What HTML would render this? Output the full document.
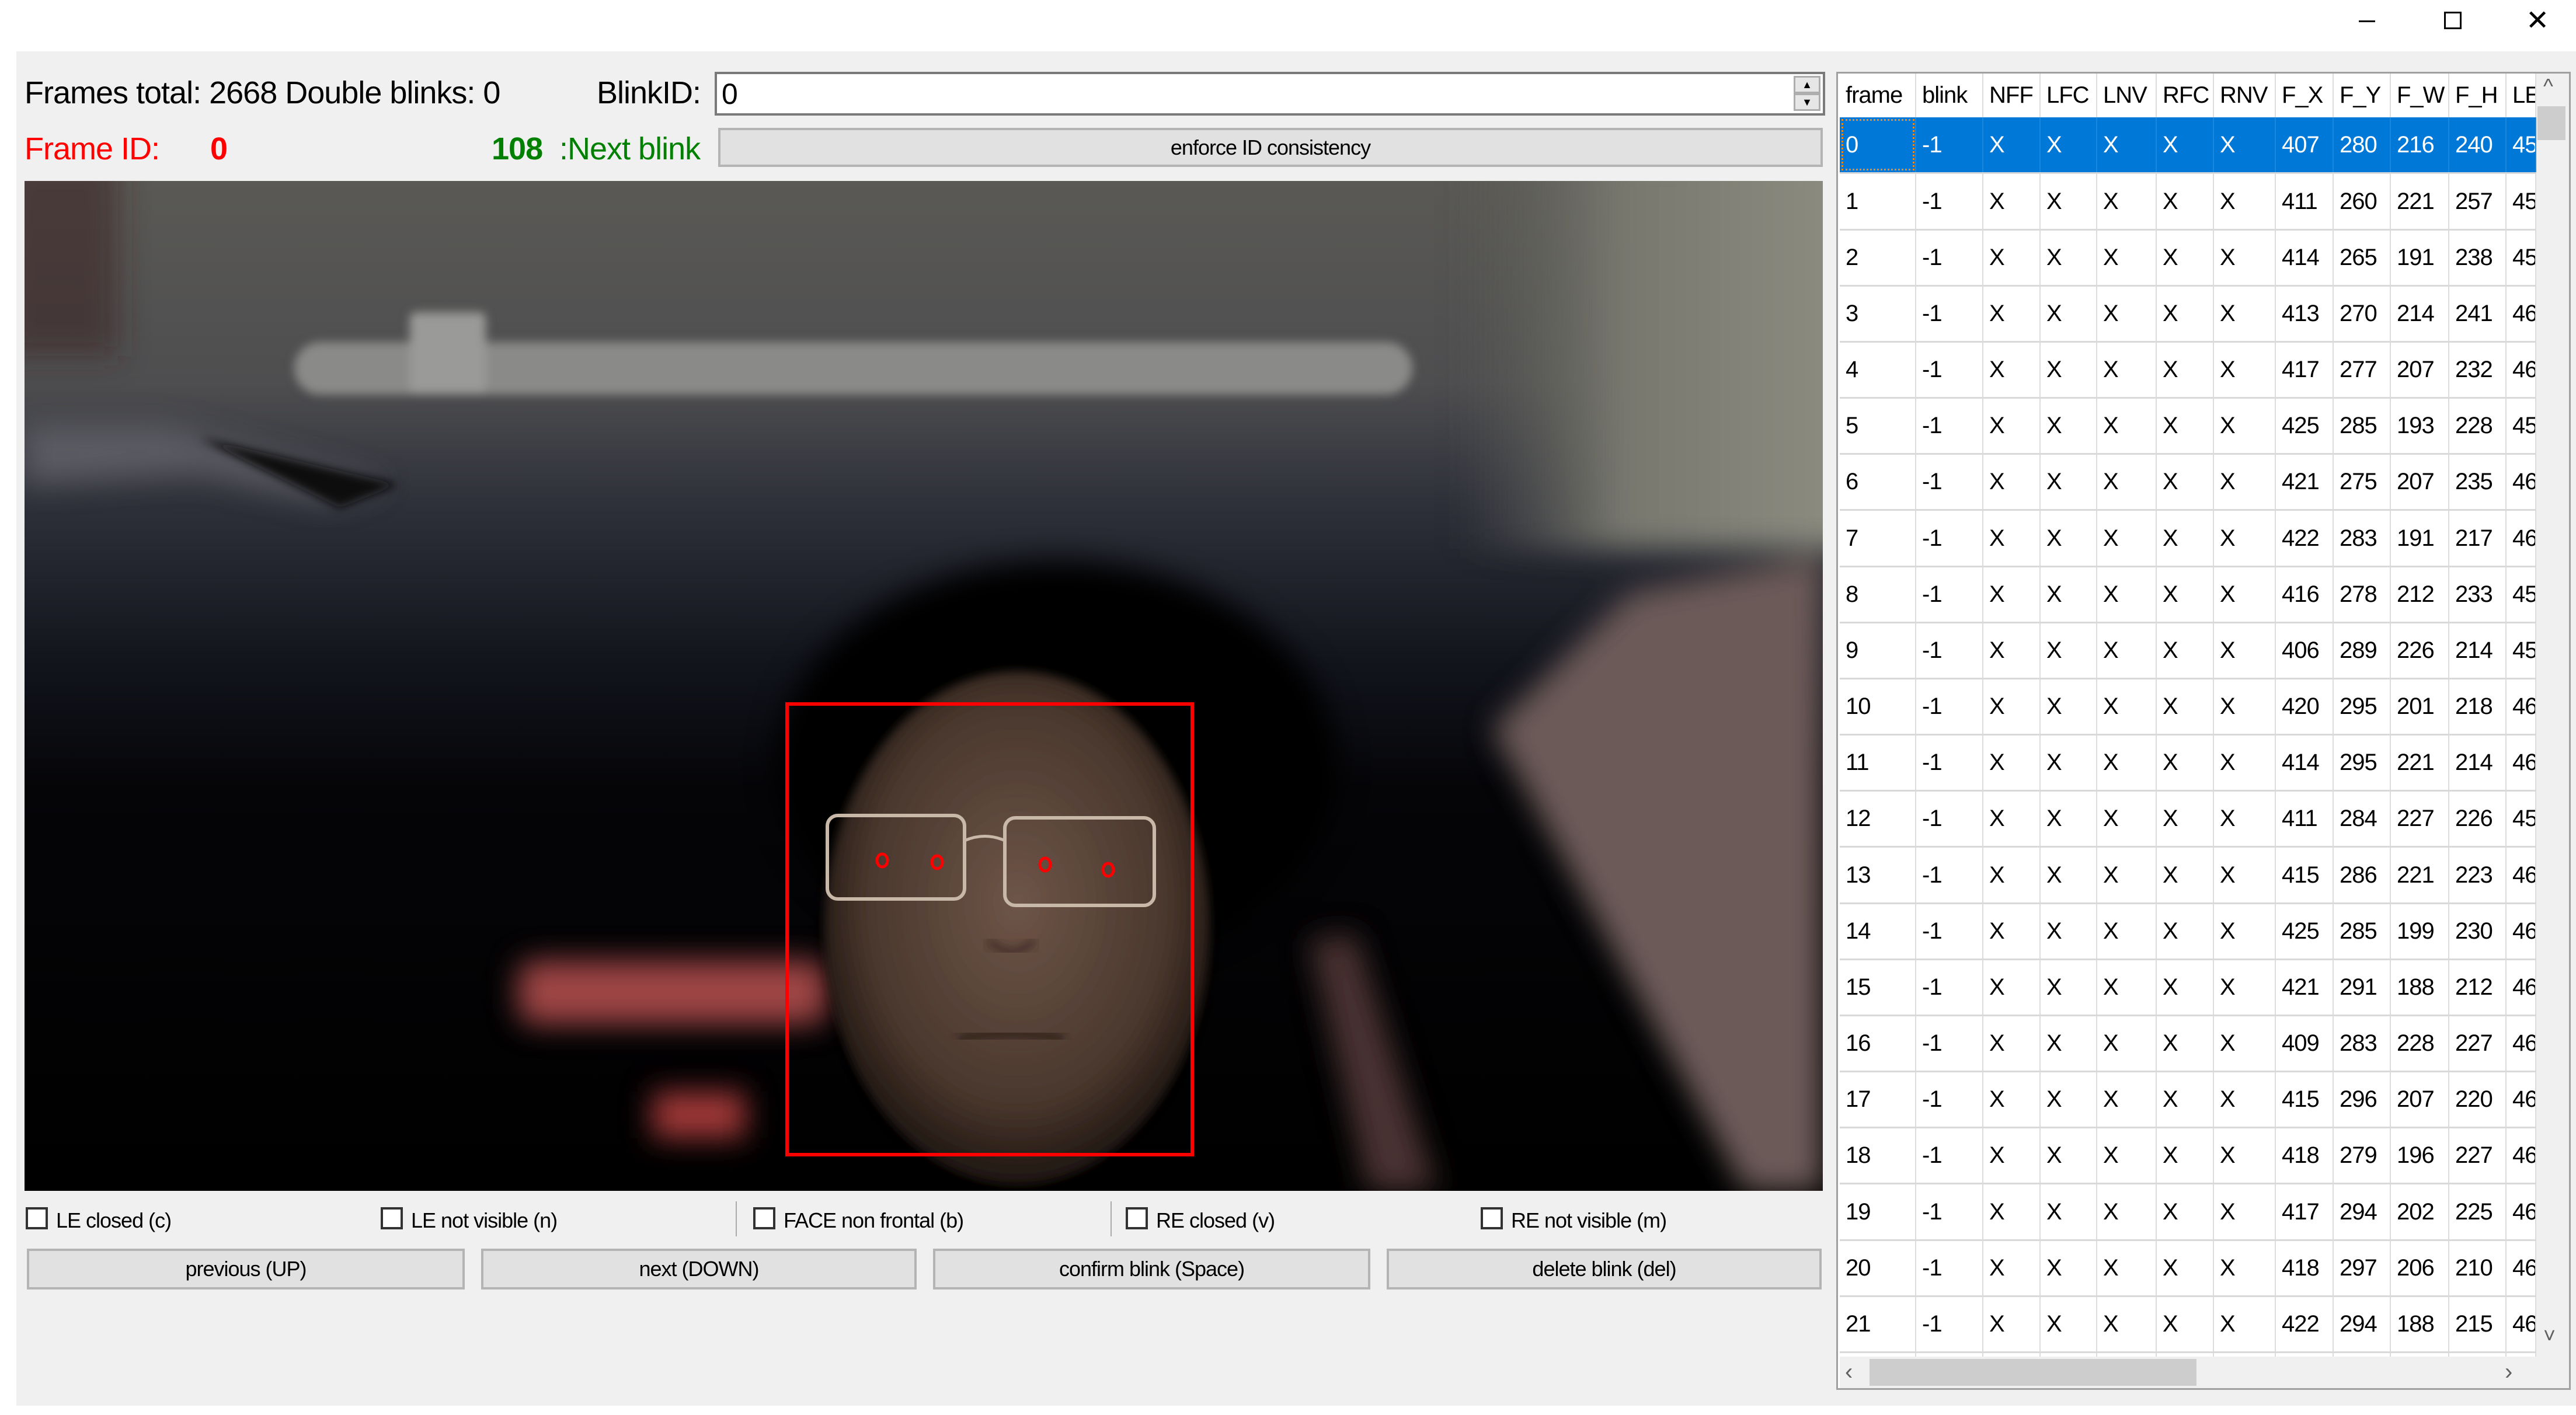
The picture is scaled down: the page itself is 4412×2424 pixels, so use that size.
<!DOCTYPE html>
<html><head><meta charset="utf-8"><style>
*{margin:0;padding:0;box-sizing:border-box}
body{width:4412px;height:2424px;background:#fff;position:relative;overflow:hidden;font-family:"Liberation Sans",sans-serif}
.a{position:absolute}
.panel{left:28px;top:88px;width:4384px;height:2320px;background:#f0f0f0}
.t{position:absolute;font-size:54px;white-space:nowrap;line-height:1;letter-spacing:-1px}
.btn{position:absolute;background:#e1e1e1;border:4px solid #b4b4b4;font-size:36px;display:flex;align-items:center;justify-content:center;color:#000;letter-spacing:-1px}
.cb{position:absolute;width:38px;height:38px;background:#fff;border:4px solid #333}
.cl{position:absolute;font-size:36px;letter-spacing:-1px}
.row{position:absolute;left:0;width:1193px;height:97px;display:grid;grid-template-columns:131px 115px 98px 97px 102px 98px 106px 99px 98px 100px 98px 51px;border-bottom:3px solid #d9d9d9;font-size:40px;letter-spacing:-1px}
.row div{border-right:2px solid #dcdcdc;padding-left:10px;display:flex;align-items:center;overflow:hidden;white-space:nowrap}
.hd{height:75px;border-bottom:none}
.sel{background:#0078d7;color:#fff}
.sel div{border-right:2px solid #1a86dc}
</style></head><body>
<div class="a" style="left:4040px;top:35px;width:28px;height:3px;background:#000"></div>
<div class="a" style="left:4186px;top:20px;width:30px;height:30px;border:3px solid #000"></div>
<div class="t" style="left:4326px;top:12px;font-size:48px">✕</div>

<div class="a panel"></div>
<div class="t" style="left:42px;top:132px">Frames total: 2668 Double blinks: 0</div>
<div class="t" style="left:1022px;top:132px">BlinkID:</div>
<div class="a" style="left:1224px;top:123px;width:1902px;height:75px;background:#fff;border:4px solid #7a7a7a"></div>
<div class="t" style="left:1236px;top:136px;font-size:50px">0</div>
<div class="a" style="left:3072px;top:130px;width:46px;height:30px;background:#e6e6e6;border:3px solid #adadad;font-size:18px;text-align:center;line-height:24px">▲</div>
<div class="a" style="left:3072px;top:160px;width:46px;height:30px;background:#e6e6e6;border:3px solid #adadad;font-size:18px;text-align:center;line-height:24px">▼</div>

<div class="t" style="left:42px;top:228px;color:#f00">Frame ID:</div>
<div class="t" style="left:360px;top:228px;color:#f00;font-weight:bold">0</div>
<div class="t" style="left:842px;top:228px;color:#008000;font-weight:bold">108</div>
<div class="t" style="left:958px;top:228px;color:#008000">:Next blink</div>
<div class="btn" style="left:1230px;top:219px;width:1892px;height:67px">enforce ID consistency</div>

<svg class="a" style="left:42px;top:310px" width="3080" height="1730" viewBox="0 0 3080 1730">
<defs>
<linearGradient id="bg" x1="0" y1="0" x2="0" y2="1">
<stop offset="0" stop-color="#5a5955"/><stop offset="0.2" stop-color="#4e4e50"/><stop offset="0.33" stop-color="#2c2e38"/><stop offset="0.48" stop-color="#12141c"/><stop offset="0.6" stop-color="#050508"/><stop offset="1" stop-color="#000"/>
</linearGradient>
<radialGradient id="face" cx="0.5" cy="0.45" r="0.55"><stop offset="0" stop-color="#6e5548"/><stop offset="0.7" stop-color="#4a382e"/><stop offset="1" stop-color="#1e1510"/></radialGradient>
<linearGradient id="rt" x1="0" y1="0" x2="1" y2="0"><stop offset="0" stop-color="#5a5a55" stop-opacity="0"/><stop offset="0.4" stop-color="#77776e"/><stop offset="1" stop-color="#8e8e82"/></linearGradient>
<filter id="bl"><feGaussianBlur stdDeviation="25"/></filter>
<filter id="bl2"><feGaussianBlur stdDeviation="8"/></filter>
</defs>
<rect width="3080" height="1730" fill="url(#bg)"/>
<g filter="url(#bl)">
<rect x="2450" y="-50" width="700" height="680" fill="url(#rt)"/>
<rect x="-40" y="-40" width="200" height="340" fill="#3a2a28" opacity="0.6"/>
<path d="M0 420 L240 420 L620 520 L520 550 L300 500 L0 520Z" fill="#6a6a70" opacity="0.7"/>
<path d="M2514 938 L2750 706 L3080 640 L3080 1730 L2946 1730 Z" fill="#6c5a58"/>
<ellipse cx="1768" cy="1000" rx="480" ry="350" fill="#030303"/>
<rect x="845" y="1335" width="530" height="110" rx="30" fill="#9e4444"/>
<rect x="1075" y="1560" width="160" height="80" fill="#a03838"/>
<path d="M2200 1300 L2300 1730 L2420 1730 L2280 1290Z" fill="#4a3030"/>
</g>
<g filter="url(#bl2)">
<rect x="462" y="276" width="1915" height="90" rx="45" fill="#8a8a88"/>
<rect x="660" y="225" width="130" height="140" rx="10" fill="#9a9a98"/>
<path d="M300 440 L640 520 L540 560 Z" fill="#111"/>
<ellipse cx="1700" cy="1280" rx="330" ry="440" fill="url(#face)"/>
</g>
<rect x="1375" y="1087" width="235" height="143" rx="18" fill="none" stroke="#c8b8a8" stroke-width="6"/>
<rect x="1679" y="1091" width="256" height="150" rx="18" fill="none" stroke="#c8b8a8" stroke-width="6"/>
<path d="M1610 1130 Q1645 1115 1679 1130" fill="none" stroke="#c8b8a8" stroke-width="5"/>
<path d="M1650 1300 Q1690 1340 1730 1300" fill="none" stroke="#3a2820" stroke-width="10" filter="url(#bl2)"/>
<path d="M1600 1470 Q1690 1450 1780 1470" fill="none" stroke="#2a1a15" stroke-width="14" filter="url(#bl2)"/>
<rect x="1306" y="896" width="694" height="772" fill="none" stroke="#f00" stroke-width="6"/>
<g fill="none" stroke="#f00" stroke-width="5">
<ellipse cx="1469" cy="1164" rx="9" ry="11"/><ellipse cx="1563" cy="1167" rx="9" ry="11"/><ellipse cx="1748" cy="1171" rx="9" ry="11"/><ellipse cx="1856" cy="1180" rx="9" ry="11"/>
</g>
</svg>

<div class="cb" style="left:44px;top:2068px"></div><div class="cl" style="left:96px;top:2070px">LE closed (c)</div>
<div class="cb" style="left:652px;top:2068px"></div><div class="cl" style="left:704px;top:2070px">LE not visible (n)</div>
<div class="a" style="left:1260px;top:2058px;width:2px;height:60px;background:#aaa"></div>
<div class="cb" style="left:1290px;top:2068px"></div><div class="cl" style="left:1342px;top:2070px">FACE non frontal (b)</div>
<div class="a" style="left:1902px;top:2058px;width:2px;height:60px;background:#aaa"></div>
<div class="cb" style="left:1928px;top:2068px"></div><div class="cl" style="left:1980px;top:2070px">RE closed (v)</div>
<div class="cb" style="left:2536px;top:2068px"></div><div class="cl" style="left:2588px;top:2070px">RE not visible (m)</div>

<div class="btn" style="left:46px;top:2139px;width:750px;height:70px">previous (UP)</div>
<div class="btn" style="left:824px;top:2139px;width:746px;height:70px">next (DOWN)</div>
<div class="btn" style="left:1598px;top:2139px;width:749px;height:70px">confirm blink (Space)</div>
<div class="btn" style="left:2375px;top:2139px;width:745px;height:70px">delete blink (del)</div>

<div class="a" style="left:3145px;top:123px;width:1258px;height:2258px;background:#fff;border:3px solid #a0a0a0"></div>
<div class="a" style="left:3151px;top:126px;width:1193px;height:2198px;overflow:hidden">
<div class="row hd" style="top:0"><div>frame</div><div>blink</div><div>NFF</div><div>LFC</div><div>LNV</div><div>RFC</div><div>RNV</div><div>F_X</div><div>F_Y</div><div>F_W</div><div>F_H</div><div>LE</div></div>
<div class="row sel" style="top:75px"><div style="outline:3px dotted #f08a1c;outline-offset:-6px">0</div><div>-1</div><div>X</div><div>X</div><div>X</div><div>X</div><div>X</div><div>407</div><div>280</div><div>216</div><div>240</div><div>45</div></div>
<div class="row" style="top:172px"><div>1</div><div>-1</div><div>X</div><div>X</div><div>X</div><div>X</div><div>X</div><div>411</div><div>260</div><div>221</div><div>257</div><div>45</div></div>
<div class="row" style="top:268px"><div>2</div><div>-1</div><div>X</div><div>X</div><div>X</div><div>X</div><div>X</div><div>414</div><div>265</div><div>191</div><div>238</div><div>45</div></div>
<div class="row" style="top:364px"><div>3</div><div>-1</div><div>X</div><div>X</div><div>X</div><div>X</div><div>X</div><div>413</div><div>270</div><div>214</div><div>241</div><div>46</div></div>
<div class="row" style="top:460px"><div>4</div><div>-1</div><div>X</div><div>X</div><div>X</div><div>X</div><div>X</div><div>417</div><div>277</div><div>207</div><div>232</div><div>46</div></div>
<div class="row" style="top:556px"><div>5</div><div>-1</div><div>X</div><div>X</div><div>X</div><div>X</div><div>X</div><div>425</div><div>285</div><div>193</div><div>228</div><div>45</div></div>
<div class="row" style="top:652px"><div>6</div><div>-1</div><div>X</div><div>X</div><div>X</div><div>X</div><div>X</div><div>421</div><div>275</div><div>207</div><div>235</div><div>46</div></div>
<div class="row" style="top:749px"><div>7</div><div>-1</div><div>X</div><div>X</div><div>X</div><div>X</div><div>X</div><div>422</div><div>283</div><div>191</div><div>217</div><div>46</div></div>
<div class="row" style="top:845px"><div>8</div><div>-1</div><div>X</div><div>X</div><div>X</div><div>X</div><div>X</div><div>416</div><div>278</div><div>212</div><div>233</div><div>45</div></div>
<div class="row" style="top:941px"><div>9</div><div>-1</div><div>X</div><div>X</div><div>X</div><div>X</div><div>X</div><div>406</div><div>289</div><div>226</div><div>214</div><div>45</div></div>
<div class="row" style="top:1037px"><div>10</div><div>-1</div><div>X</div><div>X</div><div>X</div><div>X</div><div>X</div><div>420</div><div>295</div><div>201</div><div>218</div><div>46</div></div>
<div class="row" style="top:1133px"><div>11</div><div>-1</div><div>X</div><div>X</div><div>X</div><div>X</div><div>X</div><div>414</div><div>295</div><div>221</div><div>214</div><div>46</div></div>
<div class="row" style="top:1229px"><div>12</div><div>-1</div><div>X</div><div>X</div><div>X</div><div>X</div><div>X</div><div>411</div><div>284</div><div>227</div><div>226</div><div>45</div></div>
<div class="row" style="top:1326px"><div>13</div><div>-1</div><div>X</div><div>X</div><div>X</div><div>X</div><div>X</div><div>415</div><div>286</div><div>221</div><div>223</div><div>46</div></div>
<div class="row" style="top:1422px"><div>14</div><div>-1</div><div>X</div><div>X</div><div>X</div><div>X</div><div>X</div><div>425</div><div>285</div><div>199</div><div>230</div><div>46</div></div>
<div class="row" style="top:1518px"><div>15</div><div>-1</div><div>X</div><div>X</div><div>X</div><div>X</div><div>X</div><div>421</div><div>291</div><div>188</div><div>212</div><div>46</div></div>
<div class="row" style="top:1614px"><div>16</div><div>-1</div><div>X</div><div>X</div><div>X</div><div>X</div><div>X</div><div>409</div><div>283</div><div>228</div><div>227</div><div>46</div></div>
<div class="row" style="top:1710px"><div>17</div><div>-1</div><div>X</div><div>X</div><div>X</div><div>X</div><div>X</div><div>415</div><div>296</div><div>207</div><div>220</div><div>46</div></div>
<div class="row" style="top:1806px"><div>18</div><div>-1</div><div>X</div><div>X</div><div>X</div><div>X</div><div>X</div><div>418</div><div>279</div><div>196</div><div>227</div><div>46</div></div>
<div class="row" style="top:1903px"><div>19</div><div>-1</div><div>X</div><div>X</div><div>X</div><div>X</div><div>X</div><div>417</div><div>294</div><div>202</div><div>225</div><div>46</div></div>
<div class="row" style="top:1999px"><div>20</div><div>-1</div><div>X</div><div>X</div><div>X</div><div>X</div><div>X</div><div>418</div><div>297</div><div>206</div><div>210</div><div>46</div></div>
<div class="row" style="top:2095px"><div>21</div><div>-1</div><div>X</div><div>X</div><div>X</div><div>X</div><div>X</div><div>422</div><div>294</div><div>188</div><div>215</div><div>46</div></div>
<div class="row" style="top:2191px"><div></div><div></div><div></div><div></div><div></div><div></div><div></div><div></div><div></div><div></div><div></div><div></div></div>
</div>
<div class="a" style="left:4344px;top:126px;width:56px;height:2198px;background:#f0f0f0"></div>
<div class="a" style="left:4346px;top:182px;width:48px;height:58px;background:#cdcdcd"></div>
<div class="t" style="left:4356px;top:130px;font-size:36px;color:#606060">^</div>
<div class="t" style="left:4356px;top:2270px;font-size:36px;color:#606060">˅</div>
<div class="a" style="left:3151px;top:2324px;width:1249px;height:54px;background:#f0f0f0"></div>
<div class="a" style="left:3202px;top:2328px;width:560px;height:46px;background:#cdcdcd"></div>
<div class="t" style="left:3160px;top:2330px;font-size:40px;color:#606060">‹</div>
<div class="t" style="left:4290px;top:2330px;font-size:40px;color:#606060">›</div>
</body></html>
